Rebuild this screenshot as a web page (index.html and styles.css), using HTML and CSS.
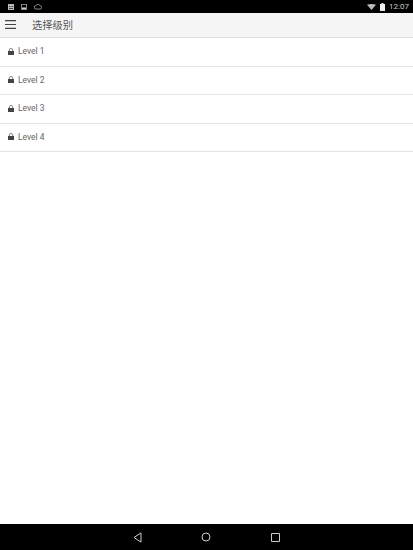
FILE: index.html
```html
<!DOCTYPE html>
<html>
  <head>
    <meta charset="utf-8" />
    <title>选择级别</title>
    <link rel="stylesheet" href="styles.css">
  </head>
  <body>
    <div class="screen">
      <div class="status-bar">
        <div class="status-left">
          <svg width="6" height="6" viewBox="0 0 6 6"><path fill="#bbb" d="M0 0h6v6H0z"/><path fill="#444" d="M1 2h1.500v1H1zM3.500 2H5v1H3.500zM1 4h4v1H1z"/></svg>
          <svg width="6" height="6" viewBox="0 0 6 6"><path fill="none" stroke="#bbb" stroke-width=".8" d="M.4.400h5.200v5.200H.4z"/><path fill="#ccc" d="M1 3.500h4V5H1z"/></svg>
          <svg width="8" height="7" viewBox="0 0 8 7"><path fill="none" stroke="#aaa" stroke-width=".8" d="M2 6h4a1.500 1.500 0 0 0 .3-3A2.400 2.400 0 0 0 2 2.600 1.700 1.700 0 0 0 2 6z"/></svg>
        </div>
        <div class="status-right">
          <svg width="9" height="6" viewBox="0 0 9 6"><path fill="#bbb" d="M0 .8Q4.500-.8 9 .8L4.500 6z"/></svg>
          <svg class="battery" width="5" height="8" viewBox="0 0 5 8"><path fill="#eee" d="M1.500 0h2v1H5v7H0V1h1.500z"/></svg>
          <span class="clock">12:07</span>
        </div>
      </div>

      <div class="toolbar">
        <svg width="11" height="9" viewBox="0 0 11 9"><path fill="#444" d="M0 0h11v1.200H0zM0 3.900h11v1.200H0zM0 7.800h11V9H0z"/></svg>
        <span class="toolbar-title">选择级别</span>
      </div>

      <ul class="level-list">
        <li class="level-item">
          <svg class="lock" width="6" height="7" viewBox="0 0 6 7"><path fill="#444" d="M0 3h6v4H0z"/><path fill="none" stroke="#666" stroke-width=".8" d="M1.300 3V1.900a1.700 1.400 0 0 1 3.400 0V3"/></svg>
          <span>Level 1</span>
        </li>
        <li class="level-item">
          <svg class="lock" width="6" height="7" viewBox="0 0 6 7"><path fill="#444" d="M0 3h6v4H0z"/><path fill="none" stroke="#666" stroke-width=".8" d="M1.300 3V1.900a1.700 1.400 0 0 1 3.400 0V3"/></svg>
          <span>Level 2</span>
        </li>
        <li class="level-item">
          <svg class="lock" width="6" height="7" viewBox="0 0 6 7"><path fill="#444" d="M0 3h6v4H0z"/><path fill="none" stroke="#666" stroke-width=".8" d="M1.300 3V1.900a1.700 1.400 0 0 1 3.400 0V3"/></svg>
          <span>Level 3</span>
        </li>
        <li class="level-item">
          <svg class="lock" width="6" height="7" viewBox="0 0 6 7"><path fill="#444" d="M0 3h6v4H0z"/><path fill="none" stroke="#666" stroke-width=".8" d="M1.300 3V1.900a1.700 1.400 0 0 1 3.400 0V3"/></svg>
          <span>Level 4</span>
        </li>
      </ul>

      <div class="nav-bar">
        <svg class="nav-back" width="9" height="11" viewBox="0 0 9 11"><path fill="none" stroke="#ccc" d="M8 .9v9.200L1 5.500z"/></svg>
        <svg width="10" height="10" viewBox="0 0 10 10"><circle cx="5" cy="5" r="4" fill="none" stroke="#ccc"/></svg>
        <svg width="9" height="9" viewBox="0 0 9 9"><path fill="none" stroke="#ccc" d="M.5.500h8v8h-8z"/></svg>
      </div>
    </div>
  </body>
</html>
```

FILE: styles.css
```css
body {
  margin: 0;
  font-family: Roboto, "Noto Sans CJK SC", sans-serif;
  background: #fff;
}

svg {
  display: block;
}

.screen {
  display: flex;
  flex-direction: column;
  width: 413px;
  height: 550px;
  overflow: hidden;
}

.status-bar {
  display: flex;
  align-items: center;
  justify-content: space-between;
  flex: none;
  height: 13px;
  padding: 0 4px 0 8px;
  background: #000;
}

.status-left {
  display: flex;
  align-items: center;
  gap: 7px;
}

.status-right {
  display: flex;
  align-items: center;
}

.battery {
  margin-left: 4px;
}

.clock {
  margin-left: 4px;
  font-size: 8px;
  color: #ccc;
}

.toolbar {
  display: flex;
  align-items: center;
  flex: none;
  height: 22px;
  padding: 0 0 2px 5px;
  background: #f5f5f5;
  border-bottom: 1px solid #ddd;
}

.toolbar-title {
  margin-left: 16px;
  font-size: 10.250px;
  color: #555;
}

.level-list {
  flex: 1;
  margin: 0;
  padding: 0;
  list-style: none;
}

.level-item {
  display: flex;
  align-items: center;
  height: 26.500px;
  padding: 0 0 1px 8px;
  border-bottom: 1px solid #e4e4e4;
  font-size: 8.500px;
  color: #666;
}

.lock {
  margin-right: 4px;
}

.nav-bar {
  display: flex;
  align-items: center;
  justify-content: center;
  gap: 60px;
  flex: none;
  height: 26px;
  padding-right: 2px;
  background: #000;
}

.nav-back {
  margin: 0 -1px 0 1px;
}
```
